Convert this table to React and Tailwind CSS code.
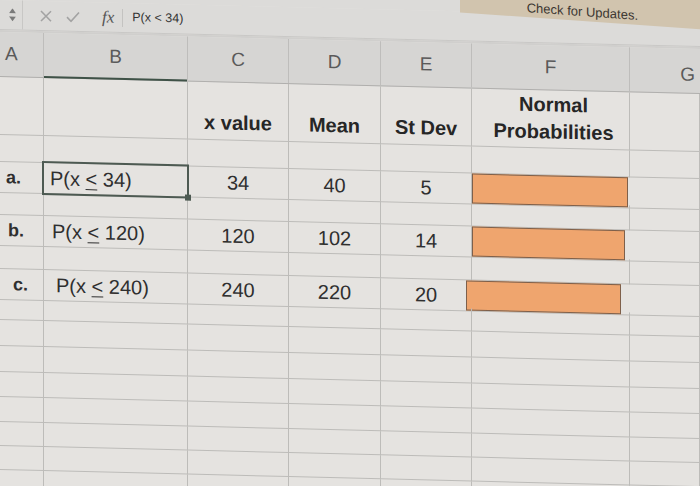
import React from "react";

const COLS = "grid grid-cols-[44px_144px_101px_92px_91px_158px_70px]";
const LINE = "border-[#bdbcb9]";

function Cell({ className = "", children }) {
  return (
    <div className={`border-r border-b ${LINE} flex items-center ${className}`}>
      {children}
    </div>
  );
}

function Orange({ className = "" }) {
  return (
    <div className={`border-b ${LINE} flex`}>
      <div className={`flex-1 bg-[#efa56e] border border-[#7e604b] ${className}`} />
    </div>
  );
}

function Le({ children }) {
  return (
    <span className="whitespace-pre">
      {"P(x "}
      <span className="underline underline-offset-[3px] decoration-1">&lt;</span>
      {" "}
      {children})
    </span>
  );
}

const blankHeights = [23, 26, 26, 25, 25, 24, 24, 24, 24, 24];

export default function App() {
  return (
    <div className="relative w-[700px] h-[486px] overflow-hidden bg-[#dcdbd9] font-['Liberation_Sans',Arial,sans-serif] text-[#2f2f2f]">
      <div className="origin-top-left skew-y-[1.4deg] bg-[#e5e3e0]">
        {/* formula bar */}
        <div className="h-[30px] bg-[#dcdbd9] flex items-center border-b border-[#c9c8c6]">
          <div className="w-[23px] h-full flex flex-col items-center justify-center gap-[3px] border-r border-[#c8c7c5] pl-[2px]">
            <svg width="7" height="5" viewBox="0 0 7 5"><path d="M3.5 0 L7 5 L0 5Z" fill="#7a7a7a" /></svg>
            <svg width="7" height="5" viewBox="0 0 7 5"><path d="M0 0 L7 0 L3.5 5Z" fill="#7a7a7a" /></svg>
          </div>
          <svg className="ml-[17px]" width="12" height="12" viewBox="0 0 12 12">
            <path d="M1 1 L11 11 M11 1 L1 11" stroke="#a3a3a3" strokeWidth="1.6" />
          </svg>
          <svg className="ml-[14px]" width="14" height="12" viewBox="0 0 14 12">
            <path d="M1 6.5 L5 10.5 L13 1.5" stroke="#a3a3a3" strokeWidth="1.6" fill="none" />
          </svg>
          <span className="ml-[22px] font-['Liberation_Serif',serif] italic text-[17px] text-[#555]">fx</span>
          <div className="ml-[8px] w-px h-[18px] bg-[#c4c3c1]" />
          <span className="ml-[9px] text-[12.5px] text-[#333]">P(x &lt; 34)</span>
        </div>
        <div className="h-[2px] bg-[#d0cfcd]" />
        {/* column letters */}
        <div className={`${COLS} h-[45px] bg-[#d6d5d3] text-[19px] text-[#5a5a5a] border-b border-[#b0afad]`}>
          <div className="border-r border-[#bebdbb] flex items-center pl-[5px]">A</div>
          <div className="relative border-r border-[#bebdbb] flex items-center justify-center">
            B
            <div className="absolute left-0 right-0 bottom-[-1px] h-[2px] bg-[#3f5247]" />
          </div>
          <div className="border-r border-[#bebdbb] flex items-center justify-center">C</div>
          <div className="border-r border-[#bebdbb] flex items-center justify-center">D</div>
          <div className="border-r border-[#bebdbb] flex items-center justify-center">E</div>
          <div className="border-r border-[#bebdbb] flex items-center justify-center">F</div>
          <div className="flex items-center justify-end pr-[5px] pt-[8px]">G</div>
        </div>
        {/* header row */}
        <div className={`${COLS} h-[58px] text-[20px] font-bold text-[#262626]`}>
          <Cell />
          <Cell />
          <Cell className="justify-center items-end pb-[5px] leading-[23px]">x value</Cell>
          <Cell className="justify-center items-end pb-[5px] leading-[23px]">Mean</Cell>
          <Cell className="justify-center items-end pb-[5px] leading-[23px]">St Dev</Cell>
          <Cell className="justify-center items-end pb-[2px] leading-[27px] text-center pl-[6px]">
            <span>Normal<br />Probabilities</span>
          </Cell>
          <Cell />
        </div>
        {/* spacer */}
        <div className={`${COLS} h-[27px]`}>
          {Array.from({ length: 7 }).map((_, i) => <Cell key={i} />)}
        </div>
        {/* row a */}
        <div className={`${COLS} h-[28px] text-[20px]`}>
          <Cell className="pl-[6px] font-bold text-[18px]">a.</Cell>
          <Cell className="relative pl-[6px]">
            <Le>34</Le>
            <div className="absolute inset-[-2px] border-2 border-[#4d5a52]" />
            <div className="absolute right-[-4px] bottom-[-4px] w-[6px] h-[6px] bg-[#4d5a52]" />
          </Cell>
          <Cell className="justify-center">34</Cell>
          <Cell className="justify-center">40</Cell>
          <Cell className="justify-center">5</Cell>
          <Orange className="mr-[2px]" />
          <Cell />
        </div>
        <div className={`${COLS} h-[25px]`}>
          {Array.from({ length: 7 }).map((_, i) => <Cell key={i} />)}
        </div>
        {/* row b */}
        <div className={`${COLS} h-[29px] text-[20px]`}>
          <Cell className="pl-[8px] font-bold text-[18px]">b.</Cell>
          <Cell className="pl-[8px]"><Le>120</Le></Cell>
          <Cell className="justify-center">120</Cell>
          <Cell className="justify-center">102</Cell>
          <Cell className="justify-center">14</Cell>
          <Orange className="mr-[5px]" />
          <Cell />
        </div>
        <div className={`${COLS} h-[25px]`}>
          {Array.from({ length: 7 }).map((_, i) => <Cell key={i} />)}
        </div>
        {/* row c */}
        <div className={`${COLS} h-[28px] text-[20px]`}>
          <Cell className="pl-[13px] font-bold text-[18px]">c.</Cell>
          <Cell className="pl-[12px]"><Le>240</Le></Cell>
          <Cell className="justify-center">240</Cell>
          <Cell className="justify-center">220</Cell>
          <Cell className="justify-center">20</Cell>
          <Orange className="ml-[-6px] mr-[9px]" />
          <Cell />
        </div>
        {blankHeights.map((h, r) => (
          <div key={r} className={COLS} style={{ height: h }}>
            {Array.from({ length: 7 }).map((_, i) => <Cell key={i} />)}
          </div>
        ))}
      </div>
      {/* update banner */}
      <div className="absolute top-[-12px] right-[-10px] w-[250px] h-[42px] origin-top-right skew-y-[4deg] bg-[#d1c4ae] flex items-end justify-end pr-[72px] pb-[3px]">
        <span className="text-[13px] text-[#3b3631] leading-none">Check for Updates.</span>
      </div>
    </div>
  );
}
